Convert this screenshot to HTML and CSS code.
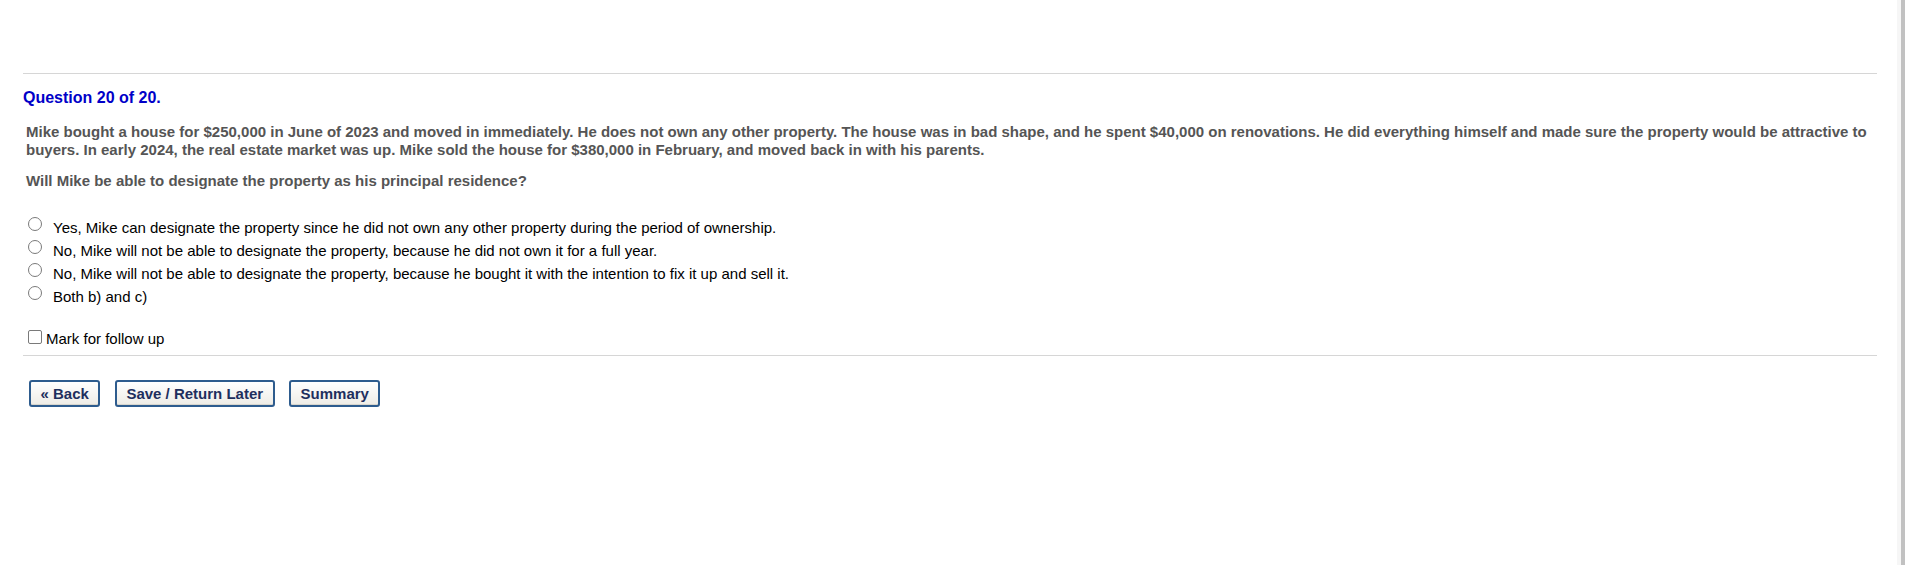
FILE: index.html
```html
<!DOCTYPE html>
<html lang="en">
<head>
<meta charset="utf-8">
<title>Question 20 of 20</title>
<link rel="stylesheet" href="styles.css">
</head>
<body>
<div class="page">
  <main class="main">
    <div class="rule"></div>
    <h1 class="title">Question 20 of 20.</h1>
    <div class="question">
      <p class="stem">Mike bought a house for $250,000 in June of 2023 and moved in immediately. He does not own any other property. The house was in bad shape, and he spent $40,000 on renovations. He did everything himself and made sure the property would be attractive to buyers. In early 2024, the real estate market was up. Mike sold the house for $380,000 in February, and moved back in with his parents.</p>
      <p class="ask">Will Mike be able to designate the property as his principal residence?</p>
      <div class="options">
        <label class="option"><input type="radio" name="q20" class="radio"><span>Yes, Mike can designate the property since he did not own any other property during the period of ownership.</span></label>
        <label class="option"><input type="radio" name="q20" class="radio"><span>No, Mike will not be able to designate the property, because he did not own it for a full year.</span></label>
        <label class="option"><input type="radio" name="q20" class="radio"><span>No, Mike will not be able to designate the property, because he bought it with the intention to fix it up and sell it.</span></label>
        <label class="option"><input type="radio" name="q20" class="radio"><span>Both b) and c)</span></label>
      </div>
      <label class="follow"><input type="checkbox" class="check"><span>Mark for follow up</span></label>
    </div>
    <div class="rule rule-bottom"></div>
    <div class="buttons">
      <button class="btn" type="button">&laquo; Back</button>
      <button class="btn" type="button">Save / Return Later</button>
      <button class="btn" type="button">Summary</button>
    </div>
  </main>
  <div class="scrollbar"><div class="thumb"></div></div>
</div>
</body>
</html>
```

FILE: styles.css
```css
html, body {
  margin: 0;
  padding: 0;
  background: #ffffff;
}

body {
  font-family: "Liberation Sans", Arial, sans-serif;
  color: #000;
}

.page {
  display: flex;
  height: 565px;
  overflow: hidden;
}

.main {
  flex: 1;
  padding: 73px 20px 0 23px;
  min-width: 0;
}

.rule {
  height: 0;
  border-top: 1px solid #d6d6d6;
}

.title {
  margin: 15px 0 0 0;
  font-size: 16px;
  font-weight: bold;
  color: #0000c8;
  line-height: 18px;
}

.question {
  padding-left: 3px;
}

.stem {
  margin: 16px 0 0 0;
  font-size: 15px;
  font-weight: bold;
  color: #555555;
  line-height: 17.5px;
}

.ask {
  margin: 14px 0 0 0;
  font-size: 15px;
  font-weight: bold;
  color: #555555;
  line-height: 17.5px;
}

.options {
  margin-top: 26px;
  display: flex;
  flex-direction: column;
}

.option {
  display: flex;
  align-items: center;
  height: 23px;
  font-size: 15px;
  line-height: 17px;
  color: #000;
}

.radio {
  -webkit-appearance: none;
  appearance: none;
  box-sizing: border-box;
  width: 14px;
  height: 14px;
  margin: 0 11px 0 2px;
  border: 1px solid #7a7a7a;
  border-radius: 50%;
  background: #fff;
  position: relative;
  top: -3px;
  flex: none;
}

.follow {
  display: flex;
  align-items: center;
  margin-top: 22px;
  font-size: 15px;
  line-height: 17px;
  height: 18px;
}

.check {
  -webkit-appearance: none;
  appearance: none;
  box-sizing: border-box;
  width: 14px;
  height: 14px;
  margin: 0 4px 0 2px;
  border: 1px solid #7a7a7a;
  border-radius: 2px;
  background: #fff;
  position: relative;
  top: -2px;
  flex: none;
}

.rule-bottom {
  margin-top: 7px;
}

.buttons {
  display: flex;
  gap: 14.5px;
  margin-top: 24px;
  padding-left: 6px;
}

.btn {
  font-family: "Liberation Sans", Arial, sans-serif;
  font-size: 15px;
  font-weight: bold;
  line-height: 17px;
  color: #1e2f5e;
  padding: 3px 9.5px;
  border: 2px solid #2e5c8e;
  border-radius: 3px;
  background: linear-gradient(#ffffff, #eeece6);
  box-shadow: inset 0 -1px 0 #d8d6ce;
  cursor: pointer;
}

.scrollbar {
  width: 8px;
  flex: none;
  height: 565px;
  background: #f6f6f6;
  display: flex;
  justify-content: flex-end;
}

.thumb {
  width: 4px;
  height: 100%;
  background: #c1c1c1;
}
```
